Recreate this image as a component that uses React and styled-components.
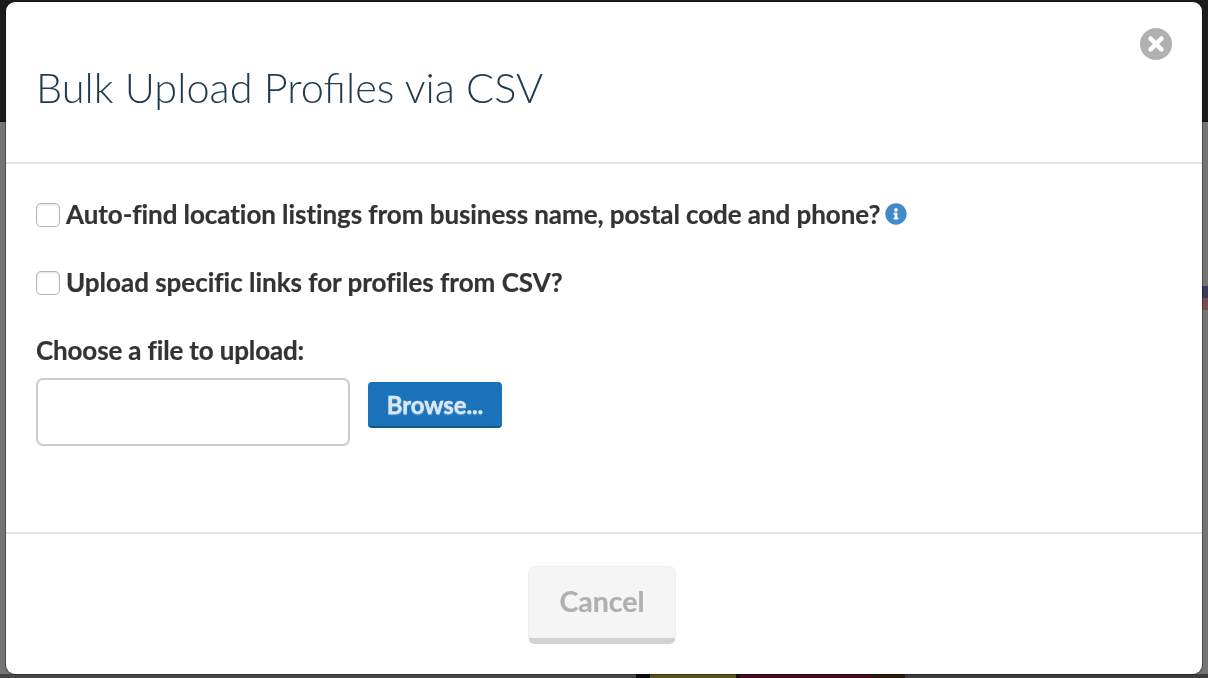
import React from 'react';
import styled, { createGlobalStyle } from 'styled-components';
import { FaInfoCircle } from 'react-icons/fa';

const GlobalStyle = createGlobalStyle`
	html, body {
		margin: 0;
		height: 100%;
		overflow: hidden;
		background-color: #6f6f6f;
		font-family: 'Lato', 'Open Sans', sans-serif;
	}
`;

const Page = styled.div`
	position: relative;
	width: 1208px;
	height: 678px;
	display: flex;
	flex-direction: column;
	overflow: hidden;
`;

const PageNav = styled.div`
	height: 122px;
	background-color: #1c1c1c;
	border-bottom: 2px solid #111;
	box-sizing: border-box;
`;

const PageBody = styled.div`
	flex: 1;
	background-color: #757575;
`;

const PageFlag = styled.div`
	position: absolute;
	top: 286px;
	right: 0;
	width: 6px;
	height: 24px;
	background: linear-gradient(#3a3a5c 0 50%, #7a4a52 50% 100%);
`;

const PageCards = styled.div`
	height: 4px;
	display: flex;
	background-color: #474747;
`;

const CardStrip = styled.div`
	width: ${(props) => props.$w}px;
	background-color: ${(props) => props.$color};
`;

const Modal = styled.div`
	position: fixed;
	top: 2px;
	left: 6px;
	width: 1196px;
	height: 672px;
	display: flex;
	flex-direction: column;
	box-sizing: border-box;
	background-color: #fff;
	border-radius: 9px;
	box-shadow: 0 0 0 1px rgba(0, 0, 0, 0.35);
`;

const CloseButton = styled.button`
	position: absolute;
	top: 26px;
	right: 30px;
	width: 32px;
	height: 32px;
	padding: 0;
	border: none;
	background: none;
	display: flex;
	filter: blur(0.4px);
`;

const ModalHeader = styled.div`
	height: 162px;
	box-sizing: border-box;
	padding: 14px 30px 2px;
	display: flex;
	align-items: center;
	border-bottom: 2px solid #e5e5e5;
`;

const Title = styled.h1`
	margin: 0 0 2px;
	font-size: 41.5px;
	font-weight: 300;
	line-height: 48px;
	color: #1f3a4d;
`;

const ModalBody = styled.div`
	flex: 1;
	box-sizing: border-box;
	padding: 32px 30px 0;
	display: flex;
	flex-direction: column;
	align-items: flex-start;
`;

const CheckRow = styled.label`
	height: 36px;
	margin-bottom: 32px;
	display: flex;
	align-items: center;
	font-size: 26px;
	font-weight: 700;
	letter-spacing: ${(props) => props.$tracking || '-0.07px'};
	color: #333;
	-webkit-text-stroke: 0.2px #333;
`;

const Check = styled.input.attrs({ type: 'checkbox' })`
	appearance: none;
	width: 24px;
	height: 24px;
	margin: 2px 6px 0 0;
	box-sizing: border-box;
	background-color: #fff;
	border: 1px solid #b5b5b5;
	border-radius: 5px;
	box-shadow: inset 0 1px 2px rgba(0, 0, 0, 0.12);
`;

const InfoIcon = styled(FaInfoCircle)`
	width: 22px;
	height: 22px;
	margin-left: 5px;
	color: #428bca;
`;

const FileLabel = styled.div`
	height: 36px;
	margin-bottom: 10px;
	display: flex;
	align-items: center;
	font-size: 26px;
	font-weight: 700;
	letter-spacing: -0.15px;
	color: #333;
	-webkit-text-stroke: 0.2px #333;
`;

const FileRow = styled.div`
	display: flex;
	align-items: flex-start;
	gap: 18px;
`;

const FileInput = styled.div`
	width: 314px;
	height: 68px;
	box-sizing: border-box;
	background-color: #fff;
	border: 2px solid #ccc;
	border-radius: 7px;
`;

const BrowseButton = styled.button`
	width: 134px;
	height: 46px;
	margin-top: 4px;
	padding: 0;
	box-sizing: border-box;
	font-family: inherit;
	font-size: 24px;
	font-weight: 700;
	letter-spacing: -0.1px;
	color: #dbe8f4;
	-webkit-text-stroke: 0.3px #dbe8f4;
	text-shadow: 0 1px 2px rgba(255, 255, 255, 0.35);
	background-color: #1a72bb;
	border: none;
	border-bottom: 2px solid #14578f;
	border-radius: 4px;
`;

const ModalFooter = styled.div`
	height: 142px;
	box-sizing: border-box;
	padding: 32px 4px 0 0;
	display: flex;
	justify-content: center;
	border-top: 2px solid #e5e5e5;
`;

const CancelButton = styled.button`
	width: 148px;
	height: 78px;
	padding: 0 0 3px;
	box-sizing: border-box;
	font-family: inherit;
	font-size: 28.5px;
	font-weight: 700;
	color: #b0b0b0;
	-webkit-text-stroke: 0.2px #b0b0b0;
	background-color: #f5f5f5;
	border: 1px solid #efefef;
	border-bottom: 6px solid #d2d2d2;
	border-radius: 7px;
`;

const cards = [
	{ w: 636, color: '#474747' },
	{ w: 14, color: '#0d0d0d' },
	{ w: 86, color: '#5a5418' },
	{ w: 4, color: '#111' },
	{ w: 132, color: '#4a0a20' },
	{ w: 33, color: '#2c1c08' },
	{ w: 303, color: '#3d3d3d' },
];

const CloseIcon = () => (
	<svg width='32' height='32' viewBox='0 0 32 32'>
		<circle cx='16' cy='16' r='16' fill='#b0b0b0' />
		<path d='M10.5 10.5 L21.5 21.5 M21.5 10.5 L10.5 21.5' stroke='#fff' strokeWidth='4.5' strokeLinecap='round' />
	</svg>
);

const App = () => {
	return (
		<Page>
			<GlobalStyle />
			<PageNav />
			<PageBody />
			<PageFlag />
			<PageCards>
				{cards.map((card, i) => <CardStrip key={i} $w={card.w} $color={card.color} />)}
			</PageCards>
			<Modal>
				<CloseButton aria-label='Close'>
					<CloseIcon />
				</CloseButton>
				<ModalHeader>
					<Title>Bulk Upload Profiles via CSV</Title>
				</ModalHeader>
				<ModalBody>
					<CheckRow>
						<Check />
						Auto-find location listings from business name, postal code and phone?
						<InfoIcon />
					</CheckRow>
					<CheckRow $tracking='-0.02px'>
						<Check />
						Upload specific links for profiles from CSV?
					</CheckRow>
					<FileLabel>Choose a file to upload:</FileLabel>
					<FileRow>
						<FileInput />
						<BrowseButton>Browse...</BrowseButton>
					</FileRow>
				</ModalBody>
				<ModalFooter>
					<CancelButton>Cancel</CancelButton>
				</ModalFooter>
			</Modal>
		</Page>
	);
};

export default App;
